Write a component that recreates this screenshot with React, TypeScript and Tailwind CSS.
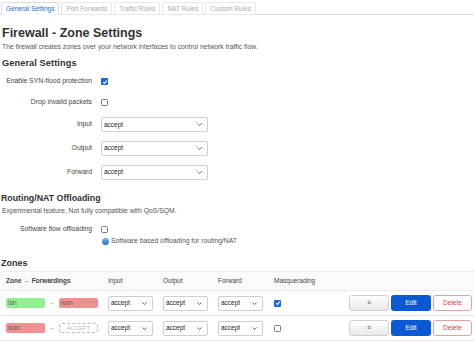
import React from "react";

const tabs = ["General Settings", "Port Forwards", "Traffic Rules", "NAT Rules", "Custom Rules"];

const Check = ({ on }: { on?: boolean }) =>
    on ? (
        <span className="flex h-[7px] w-[7px] items-center justify-center rounded-[1px] bg-[#1a6ad8]">
            <svg viewBox="0 0 10 10" className="h-[6px] w-[6px]">
                <path d="M2 5.2 4.2 7.4 8.2 2.8" fill="none" stroke="white" strokeWidth="1.8" />
            </svg>
        </span>
    ) : (
        <span className="block h-[7px] w-[7px] rounded-[1.5px] border border-[#777] bg-white" />
    );

const Select = ({ w }: { w: string }) => (
    <div className={`flex h-[15px] items-center justify-between rounded-[2px] border border-[#cfcfcf] bg-white pl-[2px] pr-[5px] text-[6.5px] text-[#222] ${w}`}>
        <span>accept</span>
        <svg viewBox="0 0 10 6" className="h-[3px] w-[5px]">
            <path d="M1 1 5 5 9 1" fill="none" stroke="#444" strokeWidth="1.6" />
        </svg>
    </div>
);

const Row = ({ label, h, children }: { label: string; h: string; children: React.ReactNode }) => (
    <div className={`flex items-center ${h}`}>
        <div className="w-[92px] text-right text-[6.8px] text-[#444]">{label}</div>
        <div className="ml-[9px]">{children}</div>
    </div>
);

const Badge = ({ name, color }: { name: string; color: string }) => (
    <span className={`flex h-[10px] w-[39px] items-center rounded-[2px] pl-[2px] text-[6.5px] text-[#666] ${color}`}>{name}</span>
);

const ZoneRow = ({ zone, zc, fwd, masq }: { zone: string; zc: string; fwd: string | null; masq?: boolean }) => (
    <div className="grid h-[25px] grid-cols-[102px_55px_55px_55px_75px_1fr] items-center border-b border-[#e6e6e6]">
        <div className="flex items-center pl-[5px]">
            <Badge name={zone} color={zc} />
            <span className="w-[14px] text-center text-[6px] text-[#666]">→</span>
            {fwd ? (
                <Badge name={fwd} color="bg-[#f09090]" />
            ) : (
                <span className="flex h-[10px] w-[39px] items-center justify-center rounded-[3px] border border-dashed border-[#bbb] text-[5.8px] text-[#bbb]">
                    ACCEPT
                </span>
            )}
        </div>
        <div className="pl-[5px]"><Select w="w-[45px]" /></div>
        <div className="pl-[5px]"><Select w="w-[45px]" /></div>
        <div className="pl-[5px]"><Select w="w-[45px]" /></div>
        <div className="pl-[6px]"><Check on={masq} /></div>
        <div className="flex justify-end gap-[2px] pr-[2px]">
            <div className="flex h-[16px] w-[40px] items-center justify-center rounded-[3px] border border-[#cfcfcf] bg-gradient-to-b from-white to-[#e8e8e8] text-[7px] text-[#555]">≡</div>
            <div className="flex h-[16px] w-[40px] items-center justify-center rounded-[3px] bg-[#0a5ad6] text-[6.5px] text-white">Edit</div>
            <div className="flex h-[16px] w-[39px] items-center justify-center rounded-[3px] border border-[#e2a3a3] bg-white text-[6.5px] text-[#c44848]">Delete</div>
        </div>
    </div>
);

export default function App() {
    return (
        <div className="h-[343px] w-[474px] overflow-hidden bg-white font-['Liberation_Sans',Arial,sans-serif] text-[#404040]">
            <div className="flex h-[15px] items-end gap-[2px] border-b border-[#dcdcdc] pl-[1px]">
                {tabs.map((t, i) => (
                    <div
                        key={t}
                        className={`-mb-px flex h-[13px] items-center rounded-t-[2px] border px-[4px] text-[6.5px] ${
                            i === 0 ? "border-[#dcdcdc] border-b-white bg-white text-[#1a6ad8]" : "border-[#e8e8e8] bg-white text-[#aaa]"
                        }`}
                    >
                        {t}
                    </div>
                ))}
            </div>

            <h2 className="mt-[11px] pl-[2px] text-[12.5px] font-bold leading-[14px] text-[#333]">Firewall - Zone Settings</h2>
            <p className="mt-[3px] pl-[2px] text-[6.8px] leading-[8px] text-[#555]">
                The firewall creates zones over your network interfaces to control network traffic flow.
            </p>

            <h3 className="mt-[6px] pl-[2px] text-[9.2px] font-bold leading-[12px] tracking-[0.1px] text-[#333]">General Settings</h3>
            <div className="mt-[2px]">
                <Row label="Enable SYN-flood protection" h="h-[21px]"><Check on /></Row>
                <Row label="Drop invalid packets" h="h-[21px]"><Check /></Row>
                <Row label="Input" h="h-[23px]"><Select w="w-[107px]" /></Row>
                <Row label="Output" h="h-[24px]"><Select w="w-[107px]" /></Row>
                <Row label="Forward" h="h-[24px]"><Select w="w-[107px]" /></Row>
            </div>

            <h3 className="mt-[8px] pl-[1px] text-[8.8px] font-bold leading-[12px] text-[#333]">Routing/NAT Offloading</h3>
            <p className="mt-[3px] pl-[2px] text-[6.8px] leading-[8px] text-[#555]">
                Experimental feature. Not fully compatible with QoS/SQM.
            </p>
            <div className="mt-[8px]">
                <Row label="Software flow offloading" h="h-[12px]"><Check /></Row>
            </div>
            <div className="mt-[2px] flex h-[8px] items-center pl-[102px] text-[6.8px] text-[#555]">
                <span className="mr-[2px] block h-[7px] w-[7px] rounded-full bg-gradient-to-b from-[#7ab6f0] to-[#1e6cc8]" />
                Software based offloading for routing/NAT
            </div>

            <h3 className="mt-[12px] pl-[1px] text-[9px] font-bold leading-[12px] text-[#333]">Zones</h3>
            <div className="mt-[2px] pl-[1px]">
                <div className="grid h-[20px] grid-cols-[102px_55px_55px_55px_75px_1fr] items-center border-y border-[#ececec] bg-[#fafafa] text-[6.5px] font-bold text-[#444]">
                    <div className="pl-[5px]">Zone → Forwardings</div>
                    <div className="pl-[5px] font-normal">Input</div>
                    <div className="pl-[5px] font-normal">Output</div>
                    <div className="pl-[5px] font-normal">Forward</div>
                    <div className="pl-[6px] font-normal">Masquerading</div>
                    <div />
                </div>
                <ZoneRow zone="lan" zc="bg-[#90f090]" fwd="wan" masq />
                <ZoneRow zone="wan" zc="bg-[#f09090]" fwd={null} />
            </div>
        </div>
    );
}
